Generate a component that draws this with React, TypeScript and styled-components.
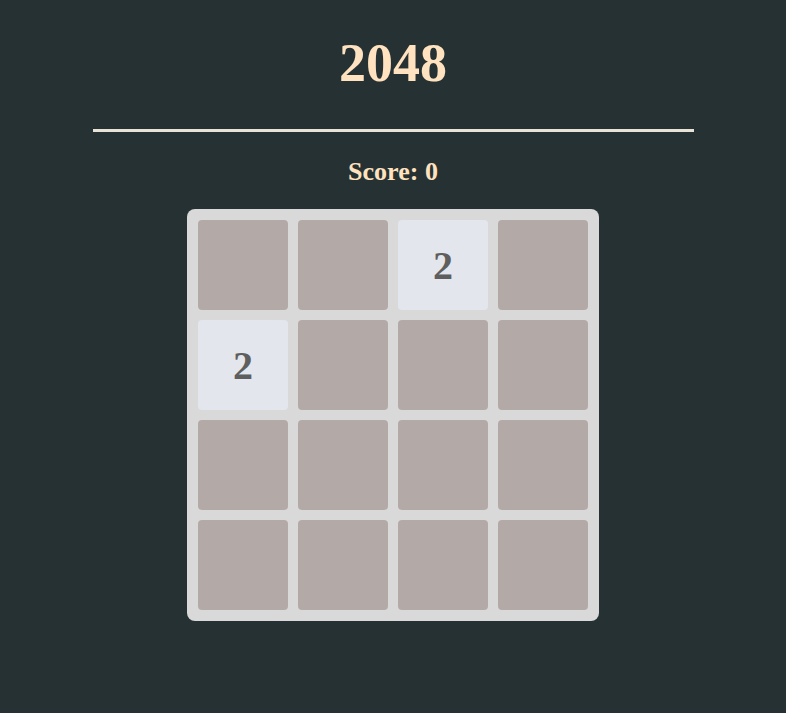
import React from 'react'
import styled, { createGlobalStyle } from 'styled-components'

const GlobalStyle = createGlobalStyle`
    body {
        margin: 0;
        background: #263133;
        font-family: "Liberation Serif", "Times New Roman", serif;
    }
`;

const Page = styled.div`
    display: flex;
    flex-direction: column;
    align-items: center;
    padding-top: 32px;
`;

const Title = styled.h1`
    margin: 0;
    font-size: 54px;
    line-height: 62px;
    font-weight: bold;
    color: #ffe2bf;
`;

const Divider = styled.div`
    width: 601px;
    height: 3px;
    margin-top: 35px;
    background: #e9e2d6;
`;

const Score = styled.h2`
    margin: 25px 0 0;
    font-size: 26px;
    line-height: 30px;
    font-weight: bold;
    color: #ffe2bf;
`;

const Board = styled.div`
    display: grid;
    grid-template-columns: repeat(4, 90px);
    grid-auto-rows: 90px;
    gap: 10px;
    padding: 11px;
    margin-top: 22px;
    background: #d9d9d9;
    border-radius: 8px;
`;

const Tile = styled.div<{ $value: number }>`
    display: flex;
    align-items: center;
    justify-content: center;
    border-radius: 4px;
    background: ${p => (p.$value ? '#e3e6ec' : '#b3aaa8')};
    color: #5e5e5e;
    font-size: 40px;
    font-weight: bold;
`;

const grid: number[][] = [
    [0, 0, 2, 0],
    [2, 0, 0, 0],
    [0, 0, 0, 0],
    [0, 0, 0, 0],
]

export default function App() {
    return (
        <>
            <GlobalStyle />
            <Page>
                <Title>2048</Title>
                <Divider />
                <Score>Score: 0</Score>
                <Board>
                    {grid.flat().map((v, i) => (
                        <Tile key={i} $value={v}>{v ? v : ''}</Tile>
                    ))}
                </Board>
            </Page>
        </>
    )
}
